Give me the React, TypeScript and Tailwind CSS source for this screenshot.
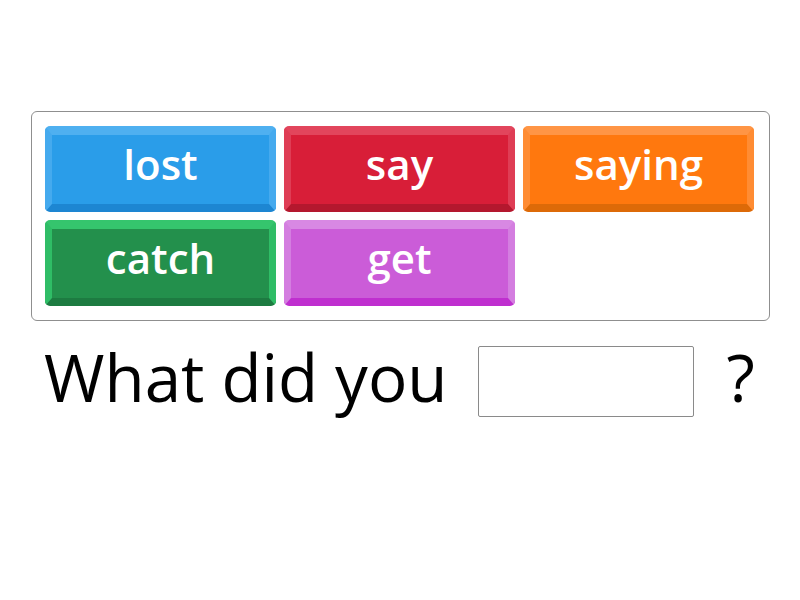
import React from "react";

const tiles = [
  { t: "lost", cls: "bg-[#2a9de9] border-t-[#4fb0f0] border-x-[#45aaee] border-b-[#1d86d2]" },
  { t: "say", cls: "bg-[#d81e38] border-t-[#e2455c] border-x-[#df3d55] border-b-[#b4182e]" },
  { t: "saying", cls: "bg-[#ff780e] border-t-[#ff9545] border-x-[#ff8c33] border-b-[#dd6a08]" },
  { t: "catch", cls: "bg-[#23904c] border-t-[#35c56d] border-x-[#2fbd66] border-b-[#1d7b41]" },
  { t: "get", cls: "bg-[#cb5cd8] border-t-[#d888e3] border-x-[#d47ee0] border-b-[#bf2fcf]" },
];

export default function App() {
  return (
    <div className="w-[800px] h-[600px] bg-white pt-[111px] pl-[31px]" style={{ fontFamily: '"Open Sans", sans-serif' }}>
      <div className="w-[739px] h-[210px] border border-[#8f8f8f] rounded-[6px] pl-[13px] pt-[14px]">
        <div className="grid grid-cols-[231px_231px_231px] auto-rows-[86px] gap-x-[8px] gap-y-[8px]">
          {tiles.map((x) => (
            <div
              key={x.t}
              className={`rounded-[5px] border-solid border-t-[9px] border-x-[7px] border-b-[8px] flex items-center justify-center text-white font-semibold text-[42px] leading-none pb-[11px] ${x.cls}`}
            >
              {x.t}
            </div>
          ))}
        </div>
      </div>
      <div className="flex items-center mt-[25px] pl-[13px] text-black">
        <span className="text-[65.5px] leading-none mt-[-10px]">What did you</span>
        <div className="ml-[30px] w-[216px] h-[71px] border border-[#8a8a8a] rounded-[2px]"></div>
        <span className="ml-[33px] text-[65.5px] leading-none mt-[-10px]">?</span>
      </div>
    </div>
  );
}
